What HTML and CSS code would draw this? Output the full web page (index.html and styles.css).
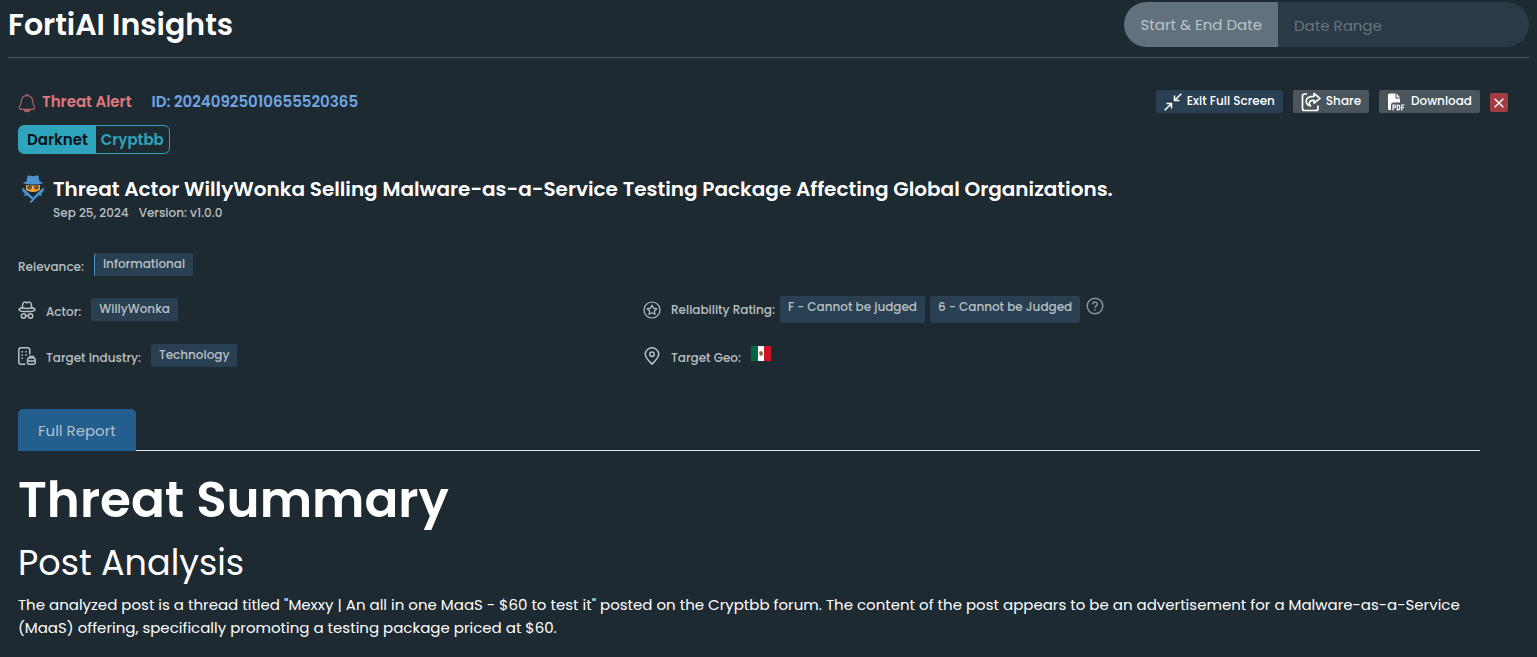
FILE: index.html
```html
<!DOCTYPE html>
<html lang="en">
<head>
<meta charset="utf-8">
<meta name="viewport" content="width=device-width, initial-scale=1">
<title>FortiAI Insights</title>
<link rel="stylesheet" href="styles.css">
</head>
<body>
<header class="topbar">
  <h1 class="topbar-title">FortiAI Insights</h1>
  <div class="date-group">
    <label class="date-label" for="range">Start &amp; End Date</label>
    <input class="date-input" id="range" type="text" placeholder="Date Range">
  </div>
</header>
<main class="report">
  <div class="report-bar">
    <div class="alert">
      <svg class="bell" viewBox="0 0 16 18" fill="none" stroke="currentColor" stroke-width="1.1"><path d="M6.800 2.500C6.800 1 9.200 1 9.200 2.500M8 2.300C4.500 2.300 3 4.800 2.900 7.500 2.800 10.500 1.200 11.200 1.200 13 1.200 14.500 2 14.800 3 14.800H13C14 14.800 14.800 14.500 14.800 13 14.800 11.200 13.200 10.500 13.100 7.500 13 4.800 11.500 2.300 8 2.300Z"/><path d="M5.500 15.500C6 17.300 10 17.300 10.500 15.500Z" fill="currentColor"/></svg>
      <span class="alert-type">Threat Alert</span>
      <span class="alert-id">ID: 20240925010655520365</span>
    </div>
    <div class="actions">
      <button class="btn btn-exit" type="button"><svg class="icon18" viewBox="0 0 18 18" fill="none" stroke="currentColor" stroke-width="1.500"><path d="M17.300.7 10.500 7.500M10.500 2.500V7.500H15.500M.7 17.300 7.500 10.500M2.500 10.500H7.500V15.500"/></svg><span>Exit Full Screen</span></button>
      <button class="btn" type="button"><svg class="icon20" viewBox="0 0 20 20" fill="none" stroke="currentColor" stroke-width="1.700" stroke-linejoin="round"><path d="M6 2H3.500Q1.500 2 1.500 4V16.500Q1.500 18.500 3.500 18.500H15Q17 18.500 17 16.500V13.500"/><path d="M13 1.500 19 6.300 13 11V8.300C9.800 8 8.300 9.500 8.300 11.200 8.300 12.300 8.800 13 9.500 13.800 6.700 13.300 5.200 11.500 5.200 9.300 5.200 6.200 8.300 4.300 13 4.300Z"/></svg><span>Share</span></button>
      <button class="btn btn-download" type="button"><svg class="icon18" viewBox="0 0 18 18"><path fill="currentColor" d="M2.500.5H8.500V5.500H13V9.500H6Q4 9.500 4 12V17H2.500Q1 17 1 15.500V2Q1 .5 2.500.5ZM9.500.5 13 4.500H9.500Z"/><path fill="none" stroke="currentColor" stroke-width="1.200" d="M6 17.500V12H7.300Q8.600 12 8.600 13.300T7.300 14.600H6M10.300 12V16.900H11Q12.800 16.900 12.800 14.500T11 12ZM14.800 17.500V12H17.500M14.800 14.500H17"/></svg><span>Download</span></button>
      <button class="btn-close" type="button" aria-label="Close"><svg class="icon-x" viewBox="0 0 10 10" stroke="currentColor" stroke-width="1.400"><path d="M.7.7 9.300 9.300M9.300.7.7 9.300"/></svg></button>
    </div>
  </div>

  <div class="source"><span class="source-type">Darknet</span><span class="source-name">Cryptbb</span></div>

  <div class="headline">
    <svg class="spy" viewBox="0 0 24 28"><path fill="#4a92d0" d="M6.500 1C8 0 9.500 1.200 12 1.200S16 0 17.500 1L18.500 6.500Q22 7.300 22 8.300 18 9.600 12 9.600T2 8.300Q2 7.300 5.500 6.500Z"/><path fill="#efa53c" d="M5 10Q12 11.200 19 10V14.500Q17 16.500 12 17 7 16.500 5 14.500Z"/><path fill="#1e2a32" d="M6.500 11.300H10.800V12.400L10 14.200H7.500L6.500 13ZM13.200 11.300H17.500V13L16.500 14.200H14L13.200 12.400Z"/><path fill="#efa53c" d="M7.800 12.200H9.700V13.200H7.800ZM14.300 12.200H16.200V13.200H14.300Z"/><path fill="#4a92d0" d="M.8 12.500 4 14.500 12 22.500 20 14.500 23.200 12.500 22.500 16 20 19 21 21 17.500 20.500 10 28 8.500 27 11 24.500 6.500 20.500 3 21 4 19 1.500 16Z"/></svg>
    <div>
      <h2 class="headline-title">Threat Actor WillyWonka Selling Malware-as-a-Service Testing Package Affecting Global Organizations.</h2>
      <p class="headline-meta"><span>Sep 25, 2024</span><span>Version: v1.0.0</span></p>
    </div>
  </div>

  <div class="facts">
    <div class="fact fact-wide"><span class="fact-label">Relevance:</span><span class="tag tag-level">Informational</span></div>
    <div class="fact">
      <svg class="fact-icon" viewBox="0 0 18 18" fill="none" stroke="currentColor" stroke-width="1.500"><path d="M4 8 4.800 3Q5.200.8 7 .9 8 1.700 9 1.700T11 .9Q12.800.8 13.200 3L14 8M4 6.500Q9 8.500 14 6.500M4 6.800C-1 8 .2 10.600 9 10.600S19 8 14 6.800"/><circle cx="5.500" cy="15" r="2.200"/><circle cx="12.500" cy="15" r="2.200"/><path d="M7.700 14.500H10.300"/></svg>
      <span class="fact-label">Actor:</span><span class="tag">WillyWonka</span>
    </div>
    <div class="fact">
      <svg class="fact-icon" viewBox="0 0 18 18" fill="none" stroke="currentColor" stroke-width="1.200"><circle cx="9" cy="9" r="8"/><path stroke-linejoin="round" d="m9 4.200 1.500 3 3.300.5-2.400 2.300.6 3.300L9 11.800l-3 1.500.6-3.300-2.400-2.300 3.300-.5Z"/></svg>
      <span class="fact-label fact-label-rating">Reliability Rating:</span><span class="tag tag-rating">F - Cannot be judged</span><span class="tag tag-rating">6 - Cannot be Judged</span>
      <button class="help" type="button" aria-label="About ratings"><svg class="fact-icon" viewBox="0 0 18 18" fill="none" stroke="currentColor" stroke-width="1.500"><circle cx="9" cy="9" r="7.800"/><path d="M6.700 7.200C6.700 4.200 11.300 4.300 11.300 7 11.300 8.800 9 8.800 9 10.700M9 12V13.500"/></svg></button>
    </div>
    <div class="fact">
      <svg class="fact-icon" viewBox="0 0 18 18" fill="none" stroke="currentColor" stroke-width="1.500"><path d="M7.500 17.200H3Q.8 17.200.8 15V3Q.8.8 3 .8H9.500Q11.700.8 11.700 3V7.500M11.500 10.700V9.500H15.500V10.700"/><rect x="9.500" y="10.900" width="7.800" height="6.300" rx="2"/><path d="M9.500 14H17.300"/><path stroke-width="1.500" stroke-dasharray="1.500 1.800" d="M4.300 4V14M8 4V10"/></svg>
      <span class="fact-label">Target Industry:</span><span class="tag">Technology</span>
    </div>
    <div class="fact">
      <svg class="fact-icon" viewBox="0 0 18 18" fill="none" stroke="currentColor" stroke-width="1.500"><path d="M9 17.200C5 13 2.300 10.500 2.300 7.200A6.700 6.400 0 0 1 15.700 7.200C15.700 10.500 13 13 9 17.200Z"/><circle cx="9" cy="7.300" r="2.200"/></svg>
      <span class="fact-label">Target Geo:</span>
      <svg class="flag" role="img" aria-label="Mexico" viewBox="0 0 20 15"><path fill="#006847" d="M0 0H7V15H0Z"/><path fill="#fff" d="M7 0H13V15H7Z"/><path fill="#ce1126" d="M13 0H20V15H13Z"/><path fill="#8a6238" d="M8.500 5.500 10 5 12 6.500 11.500 9 9.500 9.500 8.200 8Z"/><path fill="none" stroke="#6d9160" stroke-width=".7" d="M8 8.500Q10 11 12 8.500"/></svg>
    </div>
  </div>

  <div class="tabs" role="tablist"><button class="tab" type="button" role="tab" aria-selected="true">Full Report</button></div>

  <article class="article">
    <h1 class="article-title">Threat Summary</h1>
    <h2 class="article-subtitle">Post Analysis</h2>
    <p class="article-text">The analyzed post is a thread titled "Mexxy | An all in one MaaS - $60 to test it" posted on the Cryptbb forum. The content of the post appears to be an advertisement for a Malware-as-a-Service (MaaS) offering, specifically promoting a testing package priced at $60.</p>
  </article>
</main>
</body>
</html>
```

FILE: styles.css
```css
* { box-sizing: border-box; }

body {
  margin: 0;
  padding: 0 8px;
  background: #1e2a32;
  color: #fff;
  font-family: Poppins, Inter, "Liberation Sans", sans-serif;
  font-size: 15px;
}

h1, h2, p { margin: 0; }
button, input { font: inherit; color: inherit; }
button { border: 0; cursor: pointer; }
svg { display: block; flex: none; }

.topbar {
  display: flex;
  justify-content: space-between;
  align-items: flex-start;
  padding: 2px 0 10px;
  border-bottom: 1px solid #4a565e;
}
.topbar-title { font-size: 30px; line-height: 45px; font-weight: 600; }

.date-group { display: flex; height: 45px; line-height: 45px; }
.date-label {
  padding: 0 16px;
  background: #62727c;
  color: #bcc6ca;
  border-radius: 23px 0 0 23px;
}
.date-input {
  width: 251px;
  padding: 2px 16px 0;
  background: #2b3a45;
  border: 0;
  border-radius: 0 23px 23px 0;
}
.date-input::placeholder { color: #68757e; opacity: 1; }

.report { padding: 32px 10px 20px; }

.report-bar { display: flex; justify-content: space-between; align-items: flex-start; }
.alert { display: flex; align-items: center; line-height: 23px; font-weight: 600; }
.bell { width: 18px; height: 20px; margin-top: 2px; color: #ad5f64; }
.alert-type { margin: 0 20px 0 6px; color: #e0777b; }
.alert-id { color: #6fa5e2; }

.actions { display: flex; align-items: flex-start; gap: 10px; padding-right: 11px; }
.btn {
  display: flex;
  align-items: center;
  gap: 5px;
  height: 23px;
  padding: 0 8px;
  background: #4a555c;
  border-radius: 2px;
  font-size: 12px;
  font-weight: 500;
  line-height: 21px;
}
.btn span { padding-bottom: 2px; }
.btn-exit { background: #293f52; }
.btn-download { gap: 6px; }
.icon18 { width: 18px; height: 18px; }
.icon20 { width: 20px; height: 20px; }
.btn-close {
  display: grid;
  place-items: center;
  width: 18px;
  height: 19px;
  margin-top: 3px;
  padding: 0;
  background: #a03c42;
  border-radius: 2px;
}
.icon-x { width: 10px; height: 10px; }

.source {
  display: flex;
  width: fit-content;
  margin-top: 12px;
  border: 1px solid #2fa4bd;
  border-radius: 6px;
  line-height: 27px;
  font-weight: 600;
  color: #2fa4bd;
}
.source-type { padding: 0 8px; background: #2fa4bd; color: #06131a; border-radius: 4px 0 0 4px; }
.source-name { padding: 0 5px; }

.headline { display: flex; gap: 8px; margin-top: 20px; padding-left: 3px; }
.spy { width: 24px; height: 28px; margin-top: 1px; }
.headline-title { font-size: 20px; line-height: 30px; font-weight: 600; }
.headline-meta { display: flex; gap: 10px; font-size: 12px; font-weight: 500; line-height: 18px; color: #b9c0c3; }

.facts {
  display: grid;
  grid-template-columns: 625px 1fr;
  row-gap: 18px;
  margin-top: 31px;
  color: #b9c0c3;
  font-size: 12px;
  font-weight: 500;
}
.fact { display: flex; align-items: flex-start; min-height: 28px; }
.fact-wide { grid-column: 1 / -1; min-height: 27px; }
.fact-icon { width: 18px; height: 18px; margin: 3px 10px 0 0; }
.fact-label { margin-right: 10px; line-height: 27px; }
.fact-label-rating { margin-right: 5px; line-height: 24px; }
.tag {
  padding: 0 8px 2px;
  background: #293f52;
  border-radius: 2px;
  line-height: 21px;
}
.tag-level { border-left: 1px solid #4d8fca; }
.tag-rating { height: 27px; margin: -2px 5px 0 0; }
.help { padding: 0; background: none; color: #8a9296; }
.help .fact-icon { margin: -1px 0 0 1px; }
.flag { width: 20px; height: 15px; margin-top: 2px; }

.tabs { display: flex; margin: 37px 39px 0 0; border-bottom: 1px solid #e3e6e7; }
.tab {
  height: 42px;
  margin-bottom: -1px;
  padding: 0 20px;
  background: #245e8e;
  border-radius: 5px 5px 0 0;
  color: #b5c2cc;
}

.article { margin-right: 34px; }
.article-title { margin-top: 19px; font-size: 50px; line-height: 60px; font-weight: 600; }
.article-subtitle { margin-top: 11px; font-size: 35px; line-height: 44px; font-weight: 400; }
.article-text { margin-top: 8px; line-height: 23px; }
```
